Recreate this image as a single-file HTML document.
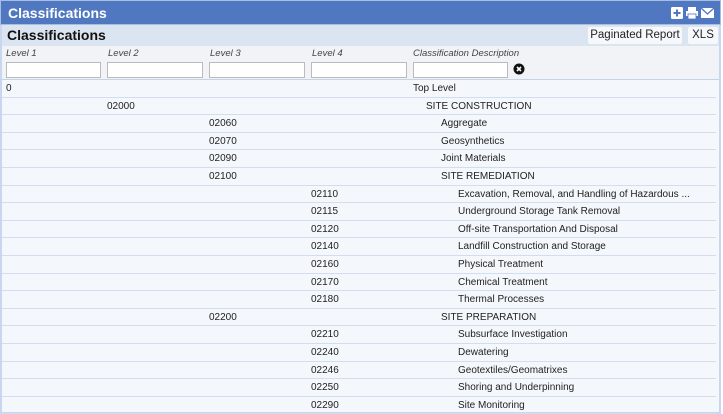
<!DOCTYPE html>
<html><head><style>
*{margin:0;padding:0;box-sizing:border-box}
body{width:723px;height:414px;overflow:hidden;background:#fff;font-family:"Liberation Sans",sans-serif;position:relative}
.frame{position:absolute;left:0;top:0;width:721px;height:414px;border:2px solid #c8d6ef;border-top:none;background:#f4f7fb}
.title{position:absolute;left:0;top:0;width:721px;height:25px;background:#5078c0;border:1px solid #a9bde0;color:#fff;font-weight:bold;font-size:14px;line-height:24px;padding-left:7px}
.sub{position:absolute;left:2px;top:25px;width:717px;height:21px;background:#dbe4f1;font-weight:bold;font-size:14px;line-height:21px;padding-left:5px;color:#111}
.btn{position:absolute;top:27px;height:17px;background:#f6f8fb;border-radius:2px;font-size:11.5px;line-height:17px;color:#222;text-align:center}
.filt{position:absolute;left:2px;top:46px;width:717px;height:34px;background:#f1f3f6;border-bottom:1px solid #c5d3ea}
.lab{position:absolute;top:2px;font-size:9.5px;font-style:italic;color:#444}
.inp{position:absolute;top:16px;height:16px;background:#fff;border:1px solid #bbb}
.row{position:absolute;left:2px;width:714px;height:17.6px;border-bottom:1px solid #d3ddee;font-size:10px;line-height:17px;color:#222}
.row span{position:absolute;top:0;white-space:nowrap}
.icons{position:absolute;right:5px;top:5px}
</style></head><body>
<div class="frame"></div>
<div class="title">Classifications
<svg class="icons" width="44" height="14" viewBox="0 0 44 14">
<rect x="0" y="1" width="12" height="12" rx="1.5" fill="#fff"/><path d="M6 3.5v7M2.5 7h7" stroke="#5078c0" stroke-width="2"/>
<rect x="17" y="1" width="8" height="4" fill="#fff"/><rect x="15" y="5" width="12" height="5" fill="#fff"/><rect x="17" y="8" width="8" height="5" fill="#fff" stroke="#5078c0" stroke-width="0.8"/>
<rect x="30" y="2" width="13" height="10" fill="#fff"/><path d="M30 2l6.5 6 6.5-6" stroke="#5078c0" stroke-width="1.3" fill="none"/>
</svg></div>
<div class="sub">Classifications</div>
<div class="btn" style="left:588px;width:94px">Paginated Report</div>
<div class="btn" style="left:688px;width:30px">XLS</div>
<div class="filt">
<span class="lab" style="left:4px">Level 1</span><div class="inp" style="left:4px;width:95px"></div>
<span class="lab" style="left:106px">Level 2</span><div class="inp" style="left:105px;width:96px"></div>
<span class="lab" style="left:208px">Level 3</span><div class="inp" style="left:207px;width:96px"></div>
<span class="lab" style="left:310px">Level 4</span><div class="inp" style="left:309px;width:96px"></div>
<span class="lab" style="left:411px">Classification Description</span><div class="inp" style="left:411px;width:95px"></div>
<svg style="position:absolute;left:511px;top:17px" width="12" height="12" viewBox="0 0 12 12"><circle cx="6" cy="6" r="5.5" fill="#111"/><path d="M4 4l4 4M8 4l-4 4" stroke="#fff" stroke-width="1.6"/></svg>
</div>
<div class="row" style="top:80px"><span style="left:4px">0</span><span style="left:411px">Top Level</span></div>
<div class="row" style="top:97.6px"><span style="left:105px">02000</span><span style="left:424px">SITE CONSTRUCTION</span></div>
<div class="row" style="top:115.2px"><span style="left:207px">02060</span><span style="left:439px">Aggregate</span></div>
<div class="row" style="top:132.8px"><span style="left:207px">02070</span><span style="left:439px">Geosynthetics</span></div>
<div class="row" style="top:150.4px"><span style="left:207px">02090</span><span style="left:439px">Joint Materials</span></div>
<div class="row" style="top:168px"><span style="left:207px">02100</span><span style="left:439px">SITE REMEDIATION</span></div>
<div class="row" style="top:185.6px"><span style="left:309px">02110</span><span style="left:456px">Excavation, Removal, and Handling of Hazardous ...</span></div>
<div class="row" style="top:203.2px"><span style="left:309px">02115</span><span style="left:456px">Underground Storage Tank Removal</span></div>
<div class="row" style="top:220.8px"><span style="left:309px">02120</span><span style="left:456px">Off-site Transportation And Disposal</span></div>
<div class="row" style="top:238.4px"><span style="left:309px">02140</span><span style="left:456px">Landfill Construction and Storage</span></div>
<div class="row" style="top:256px"><span style="left:309px">02160</span><span style="left:456px">Physical Treatment</span></div>
<div class="row" style="top:273.6px"><span style="left:309px">02170</span><span style="left:456px">Chemical Treatment</span></div>
<div class="row" style="top:291.2px"><span style="left:309px">02180</span><span style="left:456px">Thermal Processes</span></div>
<div class="row" style="top:308.8px"><span style="left:207px">02200</span><span style="left:439px">SITE PREPARATION</span></div>
<div class="row" style="top:326.4px"><span style="left:309px">02210</span><span style="left:456px">Subsurface Investigation</span></div>
<div class="row" style="top:344px"><span style="left:309px">02240</span><span style="left:456px">Dewatering</span></div>
<div class="row" style="top:361.6px"><span style="left:309px">02246</span><span style="left:456px">Geotextiles/Geomatrixes</span></div>
<div class="row" style="top:379.2px"><span style="left:309px">02250</span><span style="left:456px">Shoring and Underpinning</span></div>
<div class="row" style="top:396.8px"><span style="left:309px">02290</span><span style="left:456px">Site Monitoring</span></div>
</body></html>
